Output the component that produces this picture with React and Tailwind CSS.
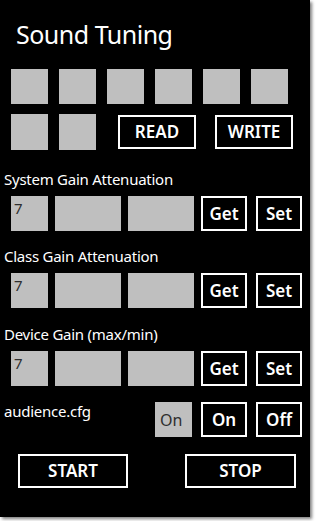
import React from "react"

const Box = ({ w, h = "h-[35px]", children }) => (
  <div className={`${w} ${h} bg-[#bfbfbf] text-[#2e2e2e] text-[15px] leading-[15px] pl-[3px] pt-[5px]`}>
    {children}
  </div>
)

const Btn = ({ className, children }) => (
  <button className={`${className} border-2 border-white text-white text-[17px] font-semibold flex items-center justify-center`}>
    {children}
  </button>
)

function GainRow({ label, mt }) {
  return (
    <>
      <div className={`${mt} pl-[4px] text-[15px] leading-[15px] tracking-[-0.25px] text-white`}>{label}</div>
      <div className="mt-[9px] flex pl-[11px] h-[35px]">
        <Box w="w-[37px]">7</Box>
        <div className="ml-[7px]"><Box w="w-[66px]" /></div>
        <div className="ml-[7px]"><Box w="w-[66px]" /></div>
        <Btn className="ml-[7px] w-[46px] h-[35px]">Get</Btn>
        <Btn className="ml-[9px] w-[46px] h-[35px]">Set</Btn>
      </div>
    </>
  )
}

export default function App() {
  return (
    <div className="w-[314px] h-[521px] bg-white">
      <div className="w-[310px] h-[517px] bg-black shadow-[2px_2px_3px_rgba(0,0,0,0.5)] flex flex-col font-['Noto_Sans',sans-serif]">
        {/* title */}
        <div className="mt-[22px] pl-[16px] text-[25px] leading-[25px] tracking-[-0.5px] text-white">Sound Tuning</div>

        {/* registers */}
        <div className="mt-[22px] flex gap-[11px] pl-[11px]">
          {[0, 1, 2, 3, 4, 5].map((i) => (
            <div key={i} className="w-[37px] h-[35px] bg-[#bfbfbf]" />
          ))}
        </div>
        <div className="mt-[10px] flex items-center pl-[11px] h-[36px]">
          <div className="w-[37px] h-[36px] bg-[#bfbfbf]" />
          <div className="ml-[11px] w-[37px] h-[36px] bg-[#bfbfbf]" />
          <Btn className="ml-[22px] w-[78px] h-[34px]">READ</Btn>
          <Btn className="ml-[19px] w-[78px] h-[34px]">WRITE</Btn>
        </div>

        <GainRow label="System Gain Attenuation" mt="mt-[22px]" />
        <GainRow label="Class Gain Attenuation" mt="mt-[18px]" />
        <GainRow label="Device Gain (max/min)" mt="mt-[19px]" />

        {/* audience */}
        <div className="mt-[16px] flex items-start h-[35px] pl-[4px]">
          <div className="w-[151px] mt-[2px] text-[15px] leading-[15px] tracking-[-0.25px] text-white">audience.cfg</div>
          <div className="w-[37px] h-[35px] bg-[#bfbfbf] text-[#2e2e2e] text-[16px] flex items-center pl-[5px]">On</div>
          <Btn className="ml-[9px] w-[46px] h-[35px]">On</Btn>
          <Btn className="ml-[9px] w-[46px] h-[35px]">Off</Btn>
        </div>

        <div className="mt-[17px] flex pl-[18px]">
          <Btn className="w-[110px] h-[34px]">START</Btn>
          <Btn className="ml-[57px] w-[111px] h-[34px]">STOP</Btn>
        </div>
      </div>
    </div>
  )
}
